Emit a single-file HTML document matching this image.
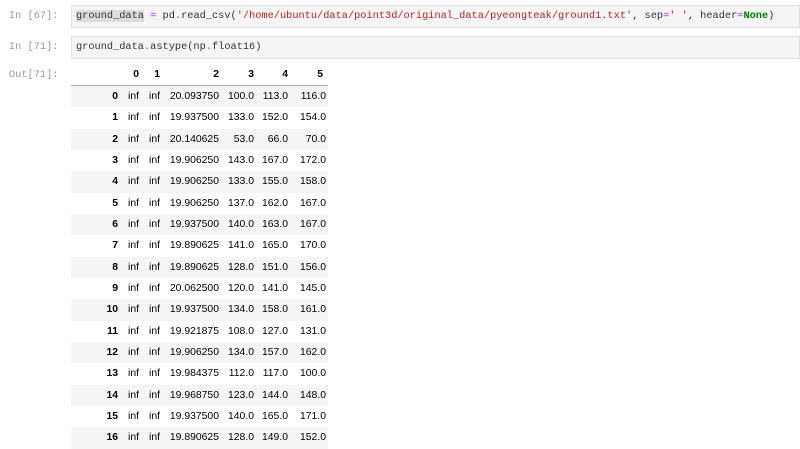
<!DOCTYPE html><html><head><style>
body{margin:0;width:800px;height:442px;overflow:hidden;background:#fff;font-family:"Liberation Sans",sans-serif;position:relative}
.p{position:absolute;font-family:"Liberation Mono",monospace;font-size:10.3px;color:#999;}
.c{position:absolute;left:71px;right:0;background:#f5f5f5;border:1px solid #e0e0e0;font-family:"Liberation Mono",monospace;font-size:10.3px;color:#333;padding-left:4px;box-sizing:border-box;white-space:nowrap;overflow:hidden}
.s{color:#ba2121}.o{color:#aa22ff}.k{color:#008000;font-weight:bold}
.hl{background:#ddd}
table{position:absolute;left:71px;top:63px;border-collapse:collapse;font-size:10.4px;color:#000;table-layout:fixed;width:257px}
td,th{text-align:right;padding:0 2px 0 0;height:21.33px;white-space:nowrap;overflow:visible}
th{font-weight:bold}
thead th{height:22px;border-bottom:1px solid #aaa}
tbody tr:nth-child(odd){background:#f5f5f5}
</style></head><body>
<div class="p" style="left:9px;top:10px">In [67]:</div>
<div class="c" style="top:5px;height:23px;line-height:21px"><span class="hl">ground_data</span> <span class="o">=</span> pd<span class="o">.</span>read_csv(<span class="s">'/home/ubuntu/data/point3d/original_data/pyeongteak/ground1.txt'</span>, sep<span class="o">=</span><span class="s">' '</span>, header<span class="o">=</span><span class="k">None</span>)</div>
<div class="p" style="left:9px;top:41px">In [71]:</div>
<div class="c" style="top:36px;height:23px;line-height:21px">ground_data<span class="o">.</span>astype(np<span class="o">.</span>float16)</div>
<div class="p" style="left:9px;top:69px">Out[71]:</div>
<table><colgroup><col style="width:49px"><col style="width:21px"><col style="width:21px"><col style="width:59px"><col style="width:35px"><col style="width:34px"><col style="width:38px"></colgroup>
<thead><tr><th></th><th>0</th><th>1</th><th>2</th><th>3</th><th>4</th><th style="padding-right:5px">5</th></tr></thead><tbody>
<tr><th>0</th><td>inf</td><td>inf</td><td>20.093750</td><td>100.0</td><td>113.0</td><td>116.0</td></tr>
<tr><th>1</th><td>inf</td><td>inf</td><td>19.937500</td><td>133.0</td><td>152.0</td><td>154.0</td></tr>
<tr><th>2</th><td>inf</td><td>inf</td><td>20.140625</td><td>53.0</td><td>66.0</td><td>70.0</td></tr>
<tr><th>3</th><td>inf</td><td>inf</td><td>19.906250</td><td>143.0</td><td>167.0</td><td>172.0</td></tr>
<tr><th>4</th><td>inf</td><td>inf</td><td>19.906250</td><td>133.0</td><td>155.0</td><td>158.0</td></tr>
<tr><th>5</th><td>inf</td><td>inf</td><td>19.906250</td><td>137.0</td><td>162.0</td><td>167.0</td></tr>
<tr><th>6</th><td>inf</td><td>inf</td><td>19.937500</td><td>140.0</td><td>163.0</td><td>167.0</td></tr>
<tr><th>7</th><td>inf</td><td>inf</td><td>19.890625</td><td>141.0</td><td>165.0</td><td>170.0</td></tr>
<tr><th>8</th><td>inf</td><td>inf</td><td>19.890625</td><td>128.0</td><td>151.0</td><td>156.0</td></tr>
<tr><th>9</th><td>inf</td><td>inf</td><td>20.062500</td><td>120.0</td><td>141.0</td><td>145.0</td></tr>
<tr><th>10</th><td>inf</td><td>inf</td><td>19.937500</td><td>134.0</td><td>158.0</td><td>161.0</td></tr>
<tr><th>11</th><td>inf</td><td>inf</td><td>19.921875</td><td>108.0</td><td>127.0</td><td>131.0</td></tr>
<tr><th>12</th><td>inf</td><td>inf</td><td>19.906250</td><td>134.0</td><td>157.0</td><td>162.0</td></tr>
<tr><th>13</th><td>inf</td><td>inf</td><td>19.984375</td><td>112.0</td><td>117.0</td><td>100.0</td></tr>
<tr><th>14</th><td>inf</td><td>inf</td><td>19.968750</td><td>123.0</td><td>144.0</td><td>148.0</td></tr>
<tr><th>15</th><td>inf</td><td>inf</td><td>19.937500</td><td>140.0</td><td>165.0</td><td>171.0</td></tr>
<tr><th>16</th><td>inf</td><td>inf</td><td>19.890625</td><td>128.0</td><td>149.0</td><td>152.0</td></tr>
</tbody></table>
</body></html>
